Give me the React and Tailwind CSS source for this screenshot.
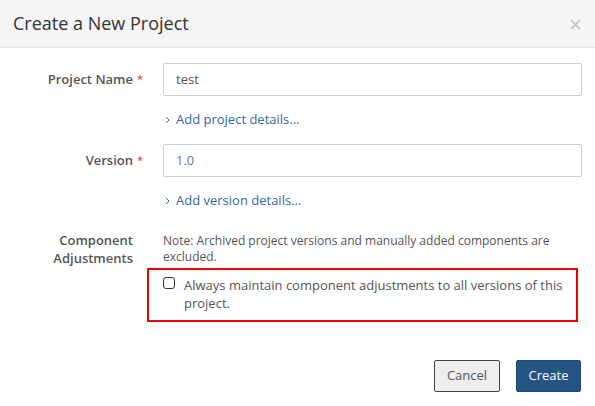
import React from "react";

function Chevron() {
  return (
    <svg width="5" height="8" viewBox="0 0 5 8" className="ml-[2px] mr-[6px]">
      <path d="M1 1L4 4L1 7" stroke="#31699b" strokeWidth="1" fill="none" />
    </svg>
  );
}

export default function App() {
  return (
    <div className="w-[595px] h-[406px] bg-white text-[#333] overflow-hidden" style={{ fontFamily: '"Open Sans", sans-serif' }}>
      <div className="h-[48px] bg-[#f5f5f5] border-b border-[#e5e5e5] flex items-center justify-between pl-[13px] pr-[14px]">
        <h1 className="text-[18px] text-[#333] font-normal">Create a New Project</h1>
        <svg width="11" height="11" viewBox="0 0 11 11" className="mt-[2px]">
          <path d="M1 1L10 10M10 1L1 10" stroke="#bbb" strokeWidth="1.6" />
        </svg>
      </div>
      <div className="pt-[15px] pr-[13px]">
        <div className="flex items-center">
          <div className="relative w-[148px] pr-[15px] text-right text-[13px] font-semibold text-[#555]">
            Project Name
            <span className="absolute right-[5px] top-[1px] text-[#d9534f] text-[11px]">*</span>
          </div>
          <div className="ml-[15px] flex-1 h-[33px] border border-[#ccc] rounded-[2px] flex items-center px-[12px] text-[13px] text-[#555]">test</div>
        </div>
        <div className="ml-[163px] mt-[14px] h-[20px] flex items-center text-[13px] text-[#31699b]">
          <Chevron />Add project details...
        </div>
        <div className="flex items-center mt-[14px]">
          <div className="relative w-[148px] pr-[15px] text-right text-[13px] font-semibold text-[#555]">
            Version
            <span className="absolute right-[5px] top-[1px] text-[#d9534f] text-[11px]">*</span>
          </div>
          <div className="ml-[15px] flex-1 h-[33px] border border-[#ccc] rounded-[2px] flex items-center px-[12px] text-[13px] text-[#777]">1.0</div>
        </div>
        <div className="ml-[163px] mt-[14px] h-[20px] flex items-center text-[13px] text-[#31699b]">
          <Chevron />Add version details...
        </div>
        <div className="flex mt-[22px]">
          <div className="w-[148px] pr-[15px] text-right text-[13px] font-semibold text-[#555] leading-[18px] -mt-[2px]">
            Component<br />Adjustments
          </div>
          <div className="flex-1">
            <div className="ml-[15px] text-[12px] leading-[16px] text-[#555] pr-[20px]">
              Note: Archived project versions and manually added components are excluded.
            </div>
            <div className="-ml-[1px] mr-[4px] mt-[3px] border-2 border-[#e00] h-[54px] flex pl-[14px] pt-[6px]">
              <div className="w-[12px] h-[12px] border border-[#333] rounded-[3px] mt-[1px] shrink-0"></div>
              <div className="ml-[9px] text-[13px] leading-[18px] text-[#555] pr-[10px]">
                Always maintain component adjustments to all versions of this project.
              </div>
            </div>
          </div>
        </div>
        <div className="flex justify-end gap-[16px] mt-[38px] pr-[1px]">
          <button className="h-[32px] w-[66px] bg-[#eee] border border-[#444] rounded-[2px] text-[13px] text-[#555]">Cancel</button>
          <button className="h-[32px] w-[65px] bg-[#245583] border border-[#1f4b75] rounded-[2px] text-[13px] text-white">Create</button>
        </div>
      </div>
    </div>
  );
}
